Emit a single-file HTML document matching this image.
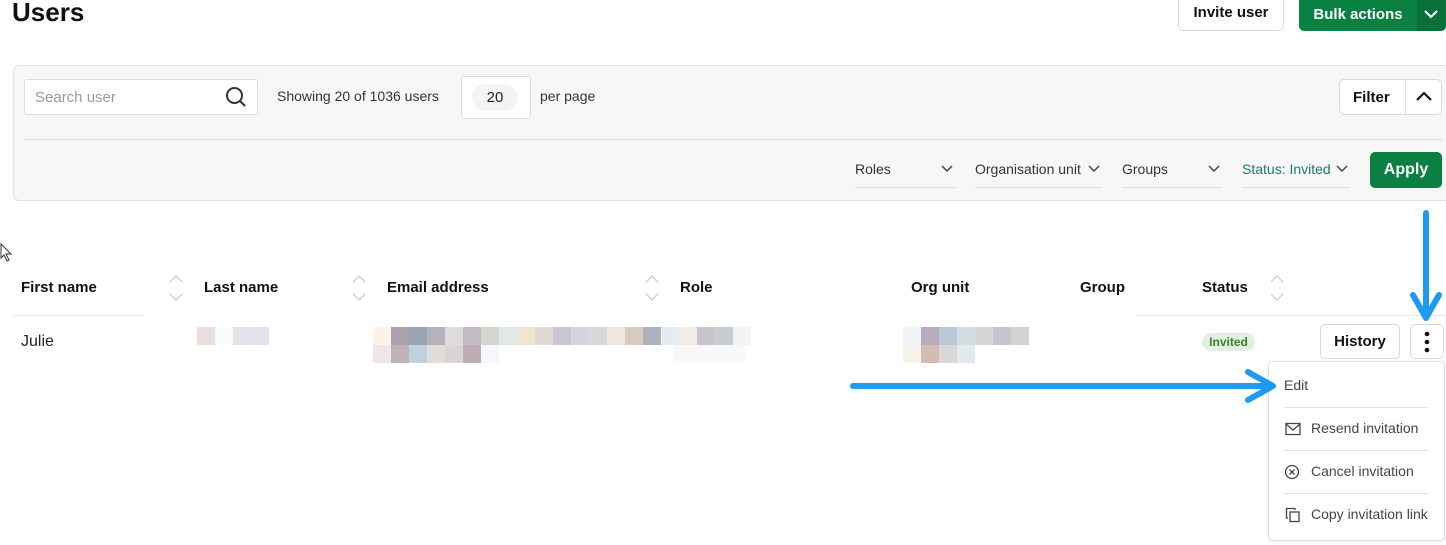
<!DOCTYPE html>
<html><head><meta charset="utf-8"><style>
*{box-sizing:border-box;margin:0;padding:0}
body{width:1446px;height:545px;overflow:hidden;background:#fff;font-family:"Liberation Sans",sans-serif;color:#222;position:relative}
.a{position:absolute}
.btn{position:absolute;border:1px solid #d8d8d8;border-radius:5px;background:#fff;font-weight:bold;font-size:15px;display:flex;align-items:center;justify-content:center;color:#111}
.h{position:absolute;top:279px;font-weight:bold;font-size:15px;color:#111}
.dd{position:absolute;top:152px;height:36px;border-bottom:1px solid #ddd;font-size:14px;color:#333;line-height:34px}
.dd svg{position:absolute;right:2px;top:13px}
.px{position:absolute;width:18px;height:18px}
.mi{position:absolute;left:1284px;font-size:14px;color:#444}
.ml{position:absolute;left:1284px;width:144px;height:1px;background:#e2e2e2}
.sort{position:absolute}
</style></head><body>
<div class="a" style="left:12px;top:-3px;font-size:26px;font-weight:bold;color:#111">Users</div>
<div class="btn" style="left:1178px;top:-6px;width:106px;height:37px">Invite user</div>
<div class="a" style="left:1299px;top:-6px;width:147px;height:37px;background:#0b8043;border-radius:5px;overflow:hidden">
 <div class="a" style="left:0;top:0;width:118px;height:37px;color:#fff;font-weight:bold;font-size:15px;line-height:37px;text-align:center;padding-top:2px">Bulk actions</div>
 <div class="a" style="left:118px;top:0;width:29px;height:37px;background:#08713a"></div>
 <svg class="a" style="left:124px;top:15px" width="16" height="10"><path d="M2 2l6 6 6-6" stroke="#fff" stroke-width="2" fill="none"/></svg>
</div>

<div class="a" style="left:13px;top:65px;width:1440px;height:136px;background:#f7f7f7;border:1px solid #e2e2e2;border-radius:6px"></div>
<div class="a" style="left:24px;top:79px;width:234px;height:36px;background:#fff;border:1px solid #ddd;border-radius:3px;font-size:15px;color:#999;padding:9px 10px">Search user</div>
<svg class="a" style="left:224px;top:85px" width="24" height="24"><circle cx="10.5" cy="10.5" r="7.5" stroke="#333" stroke-width="2" fill="none"/><path d="M16 16l5 5" stroke="#333" stroke-width="2"/></svg>
<div class="a" style="left:277px;top:88px;font-size:14px;color:#333">Showing 20 of 1036 users</div>
<div class="a" style="left:461px;top:76px;width:70px;height:43px;background:#fff;border:1px solid #ddd;border-radius:3px"></div>
<div class="a" style="left:472px;top:84px;width:46px;height:27px;background:#f4f4f4;border-radius:14px;font-size:15px;text-align:center;line-height:27px;color:#222">20</div>
<div class="a" style="left:540px;top:88px;font-size:14px;color:#333">per page</div>
<div class="btn" style="left:1339px;top:79px;width:103px;height:36px;justify-content:flex-start;padding-left:13px">Filter</div>
<div class="a" style="left:1405px;top:80px;width:1px;height:34px;background:#ddd"></div>
<svg class="a" style="left:1415px;top:89px" width="18" height="14"><path d="M2 11l7-7 7 7" stroke="#111" stroke-width="2.2" fill="none"/></svg>
<div class="a" style="left:24px;top:139px;width:1418px;height:1px;background:#dcdcdc"></div>

<div class="dd" style="left:855px;width:100px">Roles<svg width="12" height="8"><path d="M1 1l5 5 5-5" stroke="#444" stroke-width="1.5" fill="none"/></svg></div>
<div class="dd" style="left:975px;width:127px">Organisation unit<svg width="12" height="8"><path d="M1 1l5 5 5-5" stroke="#444" stroke-width="1.5" fill="none"/></svg></div>
<div class="dd" style="left:1122px;width:100px">Groups<svg width="12" height="8"><path d="M1 1l5 5 5-5" stroke="#444" stroke-width="1.5" fill="none"/></svg></div>
<div class="dd" style="left:1242px;width:108px;color:#1b7b6a">Status: Invited<svg width="12" height="8"><path d="M1 1l5 5 5-5" stroke="#444" stroke-width="1.5" fill="none"/></svg></div>
<div class="a" style="left:1370px;top:152px;width:72px;height:36px;background:#0b8043;border-radius:5px;color:#fff;font-weight:bold;font-size:16px;text-align:center;line-height:36px">Apply</div>

<svg class="a" style="left:0;top:243px" width="14" height="22"><path d="M1 1l0 14 3-3 3 6 2-1-3-6 5 0z" fill="#fff" stroke="#333" stroke-width="1"/></svg>

<div class="h" style="left:21px">First name</div>
<div class="h" style="left:204px">Last name</div>
<div class="h" style="left:387px">Email address</div>
<div class="h" style="left:680px">Role</div>
<div class="h" style="left:911px">Org unit</div>
<div class="h" style="left:1080px">Group</div>
<div class="h" style="left:1202px">Status</div>
<svg class="sort" style="left:168px;top:274px" width="16" height="30"><path d="M2 8l6-6 6 6M2 20l6 6 6-6" stroke="#ccc" stroke-width="1.3" fill="none"/></svg>
<svg class="sort" style="left:351px;top:274px" width="16" height="30"><path d="M2 8l6-6 6 6M2 20l6 6 6-6" stroke="#ccc" stroke-width="1.3" fill="none"/></svg>
<svg class="sort" style="left:644px;top:274px" width="16" height="30"><path d="M2 8l6-6 6 6M2 20l6 6 6-6" stroke="#ccc" stroke-width="1.3" fill="none"/></svg>
<svg class="sort" style="left:1269px;top:274px" width="16" height="30"><path d="M2 8l6-6 6 6M2 20l6 6 6-6" stroke="#ccc" stroke-width="1.3" fill="none"/></svg>
<div class="a" style="left:13px;top:315px;width:131px;height:1px;background:#e8e8e8"></div>
<div class="a" style="left:1135px;top:315px;width:311px;height:1px;background:#e8e8e8"></div>

<div class="a" style="left:21px;top:333px;font-size:16px;color:#222">Julie</div>
<div class="px" style="left:197px;top:327px;background:#e8dedc"></div>
<div class="px" style="left:215px;top:327px;background:#f8fbfc"></div>
<div class="px" style="left:233px;top:327px;background:#e4e2ea;width:36px"></div>

<div class="a" style="left:373px;top:327px;display:flex">
<div class="px" style="position:static;background:#fbf3e8"></div><div class="px" style="position:static;background:#aba2ae"></div><div class="px" style="position:static;background:#9ba3b4"></div><div class="px" style="position:static;background:#b3b2bd"></div><div class="px" style="position:static;background:#dedcd8"></div><div class="px" style="position:static;background:#c3bbc4"></div><div class="px" style="position:static;background:#d5d6d0"></div><div class="px" style="position:static;background:#dfe9ea"></div><div class="px" style="position:static;background:#efe5d1"></div><div class="px" style="position:static;background:#e2d9d5"></div><div class="px" style="position:static;background:#cac5d2"></div><div class="px" style="position:static;background:#d4d6de"></div><div class="px" style="position:static;background:#d5d9da"></div><div class="px" style="position:static;background:#efe6dd"></div><div class="px" style="position:static;background:#d9cac0"></div><div class="px" style="position:static;background:#abb3bd"></div><div class="px" style="position:static;background:#e8ebee"></div><div class="px" style="position:static;background:#f4ece6"></div><div class="px" style="position:static;background:#c9c6cb"></div><div class="px" style="position:static;background:#c6cdd3"></div><div class="px" style="position:static;background:#f3f3f3"></div>
</div>
<div class="a" style="left:373px;top:345px;display:flex">
<div class="px" style="position:static;background:#efe8e8"></div><div class="px" style="position:static;background:#c0b2b6"></div><div class="px" style="position:static;background:#bdd2dc"></div><div class="px" style="position:static;background:#e2dcd6"></div><div class="px" style="position:static;background:#dad4d4"></div><div class="px" style="position:static;background:#bcaeb2"></div><div class="px" style="position:static;background:#f5f8fa"></div>
</div>
<div class="a" style="left:673px;top:345px;width:72px;height:18px;background:#f8f8f8"></div>

<div class="a" style="left:903px;top:327px;display:flex">
<div class="px" style="position:static;background:#eef3f3"></div><div class="px" style="position:static;background:#b7adbf"></div><div class="px" style="position:static;background:#b9c7d6"></div><div class="px" style="position:static;background:#d0dde2"></div><div class="px" style="position:static;background:#d6d6d6"></div><div class="px" style="position:static;background:#c4c5cf"></div><div class="px" style="position:static;background:#d6d0d3"></div>
</div>
<div class="a" style="left:903px;top:345px;display:flex">
<div class="px" style="position:static;background:#f7f3ea"></div><div class="px" style="position:static;background:#d4bcb5"></div><div class="px" style="position:static;background:#dbd6d8"></div><div class="px" style="position:static;background:#e2e9ea"></div>
</div>

<div class="a" style="left:1202px;top:333px;width:53px;height:18px;background:#e2f0e2;border-radius:9px;font-size:12px;font-weight:bold;color:#3b7f2c;text-align:center;line-height:18px">Invited</div>
<div class="btn" style="left:1320px;top:324px;width:80px;height:35px">History</div>
<div class="btn" style="left:1410px;top:324px;width:34px;height:35px"><svg width="6" height="22"><circle cx="3" cy="3" r="2.3" fill="#111"/><circle cx="3" cy="11" r="2.3" fill="#111"/><circle cx="3" cy="19" r="2.3" fill="#111"/></svg></div>

<div class="a" style="left:1268px;top:361px;width:177px;height:180px;background:#fff;border:1px solid #e0e0e0;border-radius:5px;box-shadow:0 1px 4px rgba(0,0,0,.08)"></div>
<div class="mi" style="top:377px">Edit</div>
<div class="ml" style="top:407px"></div>
<svg class="a" style="left:1285px;top:422px" width="16" height="14"><rect x="1" y="1.5" width="14" height="11" stroke="#444" stroke-width="1.3" fill="none"/><path d="M1 2l7 6 7-6" stroke="#444" stroke-width="1.3" fill="none"/></svg>
<div class="mi" style="left:1311px;top:420px">Resend invitation</div>
<div class="ml" style="top:450px"></div>
<svg class="a" style="left:1284px;top:464px" width="16" height="16"><circle cx="8" cy="8" r="6.5" stroke="#444" stroke-width="1.3" fill="none"/><path d="M5.5 5.5l5 5M10.5 5.5l-5 5" stroke="#444" stroke-width="1.3"/></svg>
<div class="mi" style="left:1311px;top:463px">Cancel invitation</div>
<div class="ml" style="top:493px"></div>
<svg class="a" style="left:1285px;top:507px" width="16" height="16"><path d="M3 11H1.5V1.5H10V3" stroke="#444" stroke-width="1.3" fill="none"/><rect x="5" y="5" width="9" height="9.5" stroke="#444" stroke-width="1.3" fill="none"/></svg>
<div class="mi" style="left:1311px;top:506px">Copy invitation link</div>

<svg class="a" style="left:0;top:0" width="1446" height="545" style="pointer-events:none">
<path d="M1426 213V318M1413 295l13 23 13-23" stroke="#1e9bf0" stroke-width="6" stroke-linecap="round" stroke-linejoin="round" fill="none"/>
<path d="M853 386H1273M1248 372l25 14-25 14" stroke="#1e9bf0" stroke-width="6" stroke-linecap="round" stroke-linejoin="round" fill="none"/>
</svg>
</body></html>
